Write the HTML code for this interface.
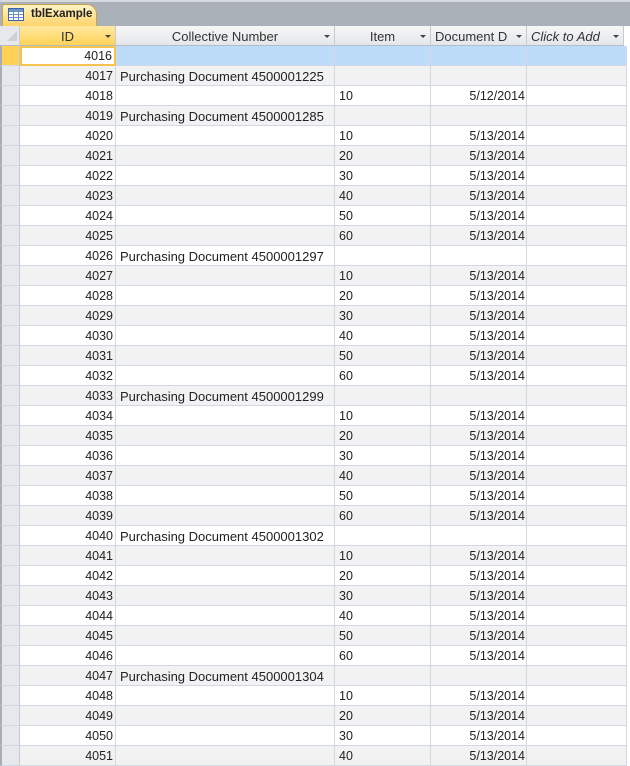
<!DOCTYPE html><html><head><style>
body{margin:0;width:630px;height:762px;overflow:hidden;background:#fff;font-family:"Liberation Sans",sans-serif;font-size:13px;color:#222;position:relative}
.a{position:absolute;box-sizing:border-box}
.row{position:absolute;left:0;width:630px;height:20px}
.c{position:absolute;top:0;height:20px;line-height:21px;border-right:1px solid #d0d7e5;border-bottom:1px solid #d0d7e5;box-sizing:border-box;white-space:nowrap;overflow:hidden}
.n{font-size:12.5px}
.h{position:absolute;top:26px;height:20px;line-height:21px;background:linear-gradient(#f7f7f7,#e4e6ea);border-right:1px solid #c5cad3;border-bottom:1px solid #b6bcc6;box-sizing:border-box;text-align:center;color:#333}
.dd{position:absolute;right:4px;top:9px;width:0;height:0;border-left:3px solid transparent;border-right:3px solid transparent;border-top:3px solid #444}
</style></head><body>
<div class="a" style="left:0;top:0;width:630px;height:26px;background:#aab1b9;border-top:2px solid #d6dade"></div>
<div class="a" style="left:2px;top:4px;width:95px;height:22px;background:linear-gradient(#fff3c4,#ffd36a);border:1px solid #c9a44e;border-bottom:none;border-radius:3px 10px 0 0"></div>
<svg class="a" style="left:8px;top:8px" width="16" height="13"><rect x="0.5" y="0.5" width="15" height="12" fill="#fff" stroke="#3a66a8"/><rect x="1" y="1" width="14" height="3" fill="#6d93c9"/><path d="M5.5 1v11M10.5 1v11M1 6.5h14M1 9.5h14" stroke="#6d93c9"/></svg>
<div class="a" style="left:31px;top:8px;font-size:11.5px;font-weight:bold;color:#222">tblExample</div>
<div class="a" style="left:0;top:26px;width:20px;height:20px;background:#e6e8ec;border-right:1px solid #c5cad3;border-bottom:1px solid #b6bcc6"></div>
<div class="a" style="left:7px;top:31px;width:0;height:0;border-left:10px solid transparent;border-bottom:10px solid #cdd1d7"></div>
<div class="h" style="left:20px;width:96px;background:linear-gradient(#ffe9a0,#ffd257)">ID<span class="dd"></span></div>
<div class="h" style="left:116px;width:219px">Collective Number<span class="dd"></span></div>
<div class="h" style="left:335px;width:96px">Item<span class="dd"></span></div>
<div class="h" style="left:431px;width:96px;text-align:left;padding-left:4px">Document D<span class="dd"></span></div>
<div class="h" style="left:527px;width:97px;text-align:left;padding-left:4px;font-style:italic">Click to Add<span class="dd"></span></div>
<div class="h" style="left:624px;width:6px;border:none;background:#fff"></div>
<div id="g"></div>
<script>
var d=[];d.push([4016,"","",""]);
d.push([4017,"Purchasing Document 4500001225","",""]);
d.push([4018,"","10","5/12/2014"]);
var pd=[["285",6],["297",6],["299",6],["302",6],["304",4]];var id=4019;
pd.forEach(function(p){d.push([id++,"Purchasing Document 4500001"+p[0],"",""]);for(var i=1;i<=p[1];i++)d.push([id++,"",String(i*10),"5/13/2014"]);});
var h="";
d.forEach(function(r,k){var y=46+k*20;var bg=k%2?"#f2f2f2":"#fff";var sel=k==0;
var cb=sel?"#bcdcfa":bg;
h+='<div class="row" style="top:'+y+'px">';
h+='<div class="c" style="left:0;width:20px;background:'+(sel?'#ffd257':'#e6e8ec')+';border-left:2px solid #a9aeb6;border-right:1px solid #c5cad3"></div>';
h+='<div class="c n" style="left:20px;width:96px;text-align:right;padding-right:2px;background:'+(sel?'#fff':bg)+(sel?';border:2px solid #f3c54d;line-height:17px':'')+'">'+r[0]+'</div>';
h+='<div class="c" style="left:116px;width:219px;padding-left:4px;background:'+cb+'">'+r[1]+'</div>';
h+='<div class="c n" style="left:335px;width:96px;padding-left:4px;background:'+cb+'">'+r[2]+'</div>';
h+='<div class="c n" style="left:431px;width:96px;text-align:right;padding-right:1px;background:'+cb+'">'+r[3]+'</div>';
h+='<div class="c" style="left:527px;width:100px;background:'+cb+'"></div>';
h+='</div>';});
document.getElementById("g").innerHTML=h;
</script>
</body></html>
